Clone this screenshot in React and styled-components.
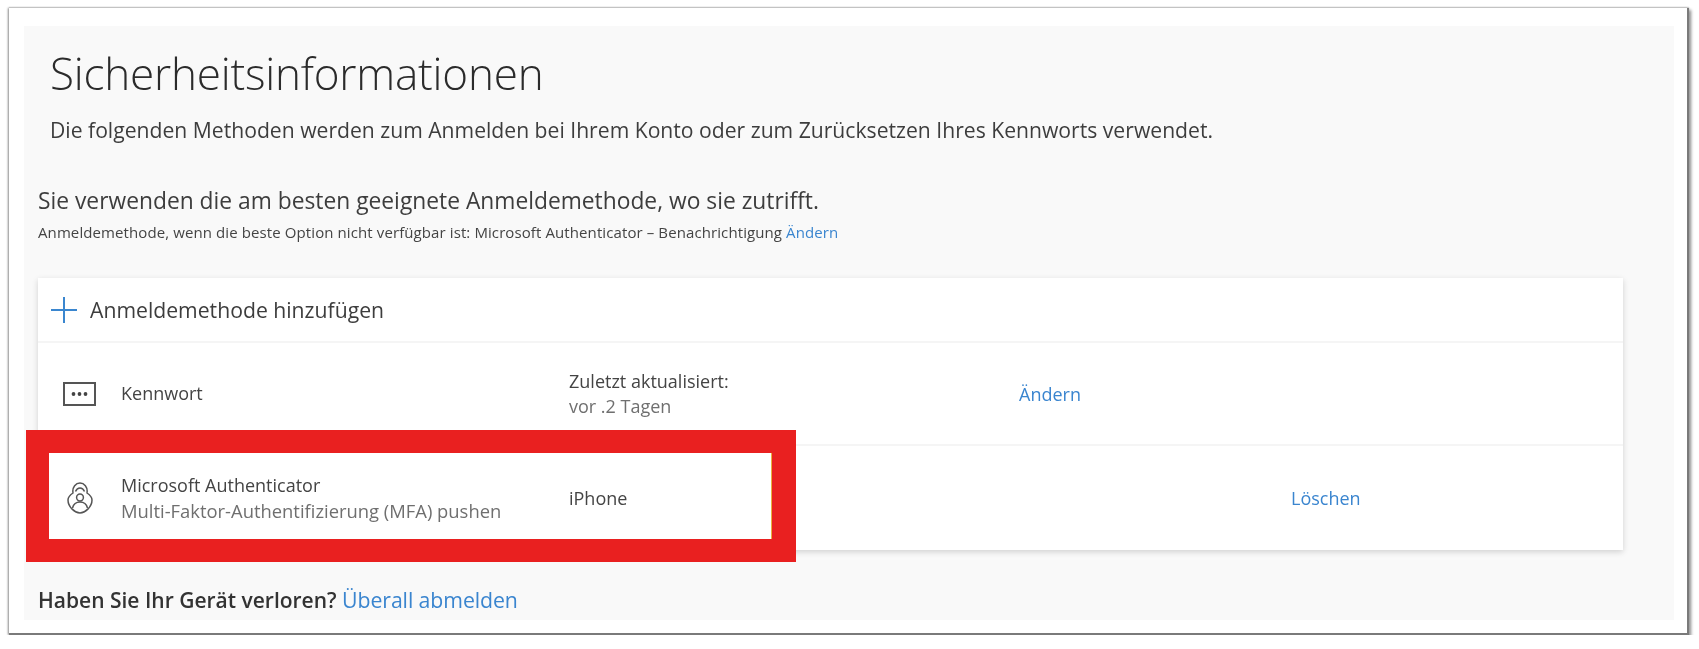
import React from "react";
import styled, { createGlobalStyle } from "styled-components";

const Global = createGlobalStyle`
  html, body { margin: 0; padding: 0; background: #fff; }
  body { font-family: "Open Sans", "Noto Sans", "Liberation Sans", sans-serif; color: #323130; }
`;

const Frame = styled.div`
  position: relative;
  box-sizing: border-box;
  margin: 8px 0 0 9px;
  width: 1680px;
  height: 627px;
  padding: 18px 13px 13px 15px;
  background: #fff;
  border-right: 2px solid #7a7a7a;
  border-bottom: 2px solid #7a7a7a;
  box-shadow: -1px 0 2px #8f8f8f, 0 -1px 1px #dcdcdc, 2px 2px 3px #888;
`;

const Panel = styled.div`
  box-sizing: border-box;
  height: 594px;
  padding: 22px 50px 0 14px;
  background: #f9f9f9;
  display: flex;
  flex-direction: column;
  overflow: hidden;
  filter: blur(0.45px);
`;

const Title = styled.h1`
  margin: 0 0 0 12px;
  font-size: 44px;
  line-height: 50px;
  font-weight: 300;
  color: #2b2b2b;
  letter-spacing: -0.2px;
`;

const Lead = styled.p`
  margin: 18px 0 0 12px;
  font-size: 21.15px;
  line-height: 28px;
  color: #3d3d3d;
`;

const Heading = styled.p`
  margin: 43px 0 0;
  font-size: 22.8px;
  line-height: 28px;
  color: #3d3d3d;
`;

const Note = styled.p`
  margin: 7px 0 0;
  font-size: 15px;
  line-height: 20px;
  color: #444;
  letter-spacing: 0.1px;
`;

const Link = styled.a`
  color: #3a85cf;
  font-weight: ${(p) => p.$weight || 400};
`;

const Card = styled.section`
  margin-top: 36px;
  width: 1585px;
  height: 272px;
  flex: none;
  background: #fff;
  box-shadow: 0 2px 6px rgba(0, 0, 0, 0.16);
  display: flex;
  flex-direction: column;
`;

const AddBar = styled.div`
  height: 65px;
  flex: none;
  display: flex;
  align-items: center;
  gap: 13px;
  padding-left: 13px;
  border-bottom: 2px solid #f5f5f5;
  font-size: 21.2px;
  color: #3d3d3d;
  box-sizing: border-box;
`;

const Row = styled.div`
  flex: none;
  height: ${(p) => p.$height}px;
  box-sizing: border-box;
  display: flex;
  align-items: center;
  border-bottom: ${(p) => (p.$last ? "none" : "2px solid #f5f5f5")};
`;

const IconCell = styled.div`
  width: 83px;
  flex: none;
  display: flex;
  justify-content: center;
  box-sizing: border-box;
`;

const NameCell = styled.div`
  width: 448px;
  flex: none;
  font-size: 18px;
  line-height: 25px;
  color: #444;
`;

const DetailCell = styled.div`
  width: ${(p) => p.$width}px;
  flex: none;
  font-size: 18px;
  line-height: 25px;
  color: #444;
`;

const Muted = styled.div`
  color: #6f6f6f;
  font-size: ${(p) => p.$size || 18}px;
`;

const Action = styled.a`
  font-size: 18px;
  color: #3a85cf;
`;

const Lost = styled.p`
  margin: 36px 0 0;
  font-size: 21px;
  line-height: 28px;
  font-weight: 600;
  color: #333;
`;

const LostLink = styled(Link)`
  font-size: 21.3px;
  letter-spacing: -0.1px;
`;

const RedFrame = styled.div`
  position: absolute;
  left: 17px;
  top: 422px;
  width: 770px;
  height: 132px;
  box-sizing: border-box;
  border: 23px solid #e92020;
  border-right-width: 24px;
  box-shadow: inset -1px 0 0 #e8b040;
  pointer-events: none;
`;

const PlusIcon = () => (
  <svg width="26" height="26" viewBox="0 0 26 26" fill="none" stroke="#3a86cf" strokeWidth="2">
    <path d="M13 0v26M0 13h26" />
  </svg>
);

const PasswordIcon = () => (
  <svg width="33" height="24" viewBox="0 0 33 24" fill="none">
    <rect x="1" y="1" width="31" height="22" stroke="#555" strokeWidth="2" />
    <circle cx="10.5" cy="12" r="1.9" fill="#444" />
    <circle cx="16.5" cy="12" r="1.9" fill="#444" />
    <circle cx="22.5" cy="12" r="1.9" fill="#444" />
  </svg>
);

const AuthenticatorIcon = () => (
  <svg width="26" height="32" viewBox="0 0 26 32" fill="none" stroke="#555" strokeWidth="1.5">
    <path d="M6 11C5 5 9 1 13 1s8 4 7 10c3 2 5 4 5 7 0 7-7 13-12 13S1 25 1 18c0-3 2-5 5-7z" />
    <path d="M8.5 9.5c1-2.4 2.6-3.6 4.5-3.6s3.5 1.2 4.5 3.6" />
    <circle cx="13" cy="15.5" r="3.4" />
    <path d="M5.500 26c1-4 4-6 7.500-6s6.500 2 7.500 6" />
  </svg>
);

export default function App() {
  return (
    <>
      <Global />
      <Frame>
        <Panel>
          <Title>Sicherheitsinformationen</Title>
          <Lead>Die folgenden Methoden werden zum Anmelden bei Ihrem Konto oder zum Zurücksetzen Ihres Kennworts verwendet.</Lead>
          <Heading>Sie verwenden die am besten geeignete Anmeldemethode, wo sie zutrifft.</Heading>
          <Note>
            Anmeldemethode, wenn die beste Option nicht verfügbar ist: Microsoft Authenticator – Benachrichtigung <Link>Ändern</Link>
          </Note>
          <Card>
            <AddBar>
              <PlusIcon />
              Anmeldemethode hinzufügen
            </AddBar>
            <Row $height={103}>
              <IconCell><PasswordIcon /></IconCell>
              <NameCell>Kennwort</NameCell>
              <DetailCell $width={450}>
                <div>Zuletzt aktualisiert:</div>
                <Muted>vor .2 Tagen</Muted>
              </DetailCell>
              <Action>Ändern</Action>
            </Row>
            <Row $height={104} $last>
              <IconCell><AuthenticatorIcon /></IconCell>
              <NameCell>
                <div>Microsoft Authenticator</div>
                <Muted $size={18.4}>Multi-Faktor-Authentifizierung (MFA) pushen</Muted>
              </NameCell>
              <DetailCell $width={722}>iPhone</DetailCell>
              <Action>Löschen</Action>
            </Row>
          </Card>
          <Lost>
            Haben Sie Ihr Gerät verloren? <LostLink $weight={400}>Überall abmelden</LostLink>
          </Lost>
        </Panel>
        <RedFrame />
      </Frame>
    </>
  );
}
